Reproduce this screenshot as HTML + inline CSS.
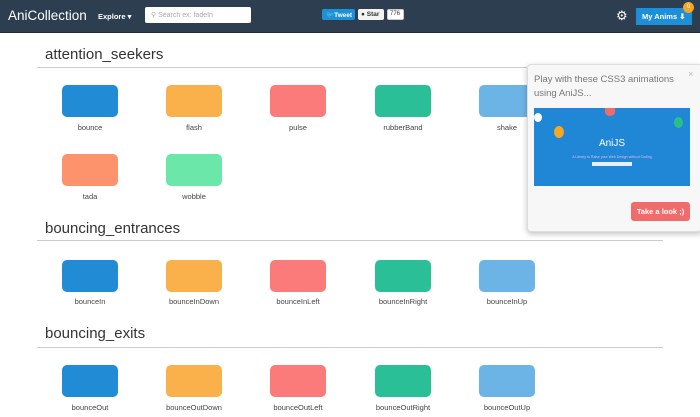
<!DOCTYPE html>
<html><head><style>
*{margin:0;padding:0;box-sizing:border-box}
body{width:700px;height:417px;overflow:hidden;background:#fff;font-family:"Liberation Sans",sans-serif;position:relative}
.nav{position:absolute;left:0;top:0;width:700px;height:33px;background:#2c3e50;border-bottom:1px solid #1e2b38}
.abs{position:absolute}
h2{position:absolute;left:45px;font-size:15px;font-weight:normal;color:#333}
.hr{position:absolute;left:37px;width:626px;height:1px;background:#ccc}
.b{position:absolute;width:56px;height:32px;border-radius:5px}
.l{position:absolute;width:104px;text-align:center;font-size:7.5px;color:#444}
</style></head><body>
<div class="nav">
<div class="abs" style="left:8px;top:8px;color:#fff;font-size:13.5px">AniCollection</div>
<div class="abs" style="left:98px;top:12px;color:#fff;font-size:7.5px;font-weight:bold">Explore ▾</div>
<div class="abs" style="left:145px;top:7px;width:106px;height:16px;background:#fff;border-radius:2px;font-size:7px;color:#aaa;padding:4px 0 0 6px">&#9906; Search ex: fadeIn</div>
<div class="abs" style="left:322px;top:9px;width:33px;height:11px;background:#1d91d8;border-radius:2px;color:#fff;font-size:6.5px;font-weight:bold;padding:2px 0 0 4px">🐦Tweet</div>
<div class="abs" style="left:358px;top:9px;width:26px;height:11px;background:#f3f3f3;border-radius:2px;color:#333;font-size:6.5px;font-weight:bold;padding:2px 0 0 3px">● Star</div>
<div class="abs" style="left:387px;top:9px;width:17px;height:11px;background:#fff;border:1px solid #ccc;border-radius:2px;color:#333;font-size:6px;padding:1px 0 0 2px">776</div>
<div class="abs" style="left:616px;top:8px;color:#fff;font-size:13px">⚙</div>
<div class="abs" style="left:636px;top:8px;width:56px;height:17px;background:#1d8fd8;color:#fff;font-size:7.5px;font-weight:bold;padding:4px 0 0 6px">My Anims ⬇</div>
<div class="abs" style="left:683px;top:2px;width:11px;height:11px;border-radius:50%;background:#f5a623;color:#fff;font-size:6px;text-align:center;line-height:11px">0</div>
</div>

<h2 style="top:46px">attention_seekers</h2><div class="hr" style="top:67px"></div>
<h2 style="top:220px">bouncing_entrances</h2><div class="hr" style="top:240px"></div>
<h2 style="top:325px">bouncing_exits</h2><div class="hr" style="top:347px"></div>

<div class="b" style="left:62px;top:85px;background:#228bd6"></div><div class="l" style="left:38px;top:123px">bounce</div>
<div class="b" style="left:166px;top:85px;background:#fbb14b"></div><div class="l" style="left:142px;top:123px">flash</div>
<div class="b" style="left:270px;top:85px;background:#fb7a7a"></div><div class="l" style="left:246px;top:123px">pulse</div>
<div class="b" style="left:375px;top:85px;background:#2bbf97"></div><div class="l" style="left:351px;top:123px">rubberBand</div>
<div class="b" style="left:479px;top:85px;background:#6db4e6"></div><div class="l" style="left:455px;top:123px">shake</div>
<div class="b" style="left:62px;top:154px;background:#fd936d"></div><div class="l" style="left:38px;top:192px">tada</div>
<div class="b" style="left:166px;top:154px;background:#6ae7a9"></div><div class="l" style="left:142px;top:192px">wobble</div>

<div class="b" style="left:62px;top:260px;background:#228bd6"></div><div class="l" style="left:38px;top:297px">bounceIn</div>
<div class="b" style="left:166px;top:260px;background:#fbb14b"></div><div class="l" style="left:142px;top:297px">bounceInDown</div>
<div class="b" style="left:270px;top:260px;background:#fb7a7a"></div><div class="l" style="left:246px;top:297px">bounceInLeft</div>
<div class="b" style="left:375px;top:260px;background:#2bbf97"></div><div class="l" style="left:351px;top:297px">bounceInRight</div>
<div class="b" style="left:479px;top:260px;background:#6db4e6"></div><div class="l" style="left:455px;top:297px">bounceInUp</div>

<div class="b" style="left:62px;top:365px;background:#228bd6"></div><div class="l" style="left:38px;top:403px">bounceOut</div>
<div class="b" style="left:166px;top:365px;background:#fbb14b"></div><div class="l" style="left:142px;top:403px">bounceOutDown</div>
<div class="b" style="left:270px;top:365px;background:#fb7a7a"></div><div class="l" style="left:246px;top:403px">bounceOutLeft</div>
<div class="b" style="left:375px;top:365px;background:#2bbf97"></div><div class="l" style="left:351px;top:403px">bounceOutRight</div>
<div class="b" style="left:479px;top:365px;background:#6db4e6"></div><div class="l" style="left:455px;top:403px">bounceOutUp</div>

<div class="abs" style="left:527px;top:64px;width:175px;height:168px;background:#f7f7f7;border:1px solid #ddd;border-radius:4px;box-shadow:0 2px 6px rgba(0,0,0,.25)">
<div class="abs" style="left:6px;top:8px;width:150px;font-size:9.5px;line-height:14px;color:#777">Play with these CSS3 animations using AniJS...</div>
<div class="abs" style="left:160px;top:4px;font-size:9px;color:#bbb">×</div>
<div class="abs" style="left:6px;top:43px;width:156px;height:78px;background:#1f87d6">
<div class="abs" style="left:0;top:5px;width:8px;height:9px;border-radius:50%;background:#fff"></div>
<div class="abs" style="left:20px;top:18px;width:10px;height:12px;border-radius:50%;background:#f5a623"></div>
<div class="abs" style="left:71px;top:0;width:10px;height:8px;border-radius:0 0 50% 50%;background:#f26b6b"></div>
<div class="abs" style="left:140px;top:9px;width:9px;height:11px;border-radius:50%;background:#2bbf87"></div>
<div class="abs" style="left:0;top:30px;width:156px;text-align:center;color:#fff;font-size:10px">AniJS</div>
<div class="abs" style="left:0;top:47px;width:156px;text-align:center;color:#dbe;font-size:3.5px">A Library to Raise your Web Design without Coding</div>
<div class="abs" style="left:58px;top:54px;width:40px;height:4px;background:#e8eef5"></div>
</div>
<div class="abs" style="left:103px;top:137px;width:59px;height:19px;background:#f26b6b;border-radius:3px;color:#fff;font-size:7.5px;font-weight:bold;text-align:center;line-height:19px">Take a look ;)</div>
</div>
</body></html>
